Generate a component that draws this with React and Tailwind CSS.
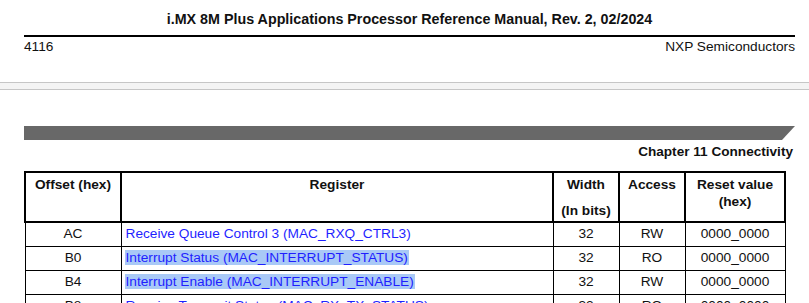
import React from "react";

const rows = [
  { off: "AC", reg: "Receive Queue Control 3 (MAC_RXQ_CTRL3)", w: "32", a: "RW", r: "0000_0000", hl: false },
  { off: "B0", reg: "Interrupt Status (MAC_INTERRUPT_STATUS)", w: "32", a: "RO", r: "0000_0000", hl: true },
  { off: "B4", reg: "Interrupt Enable (MAC_INTERRUPT_ENABLE)", w: "32", a: "RW", r: "0000_0000", hl: true },
  { off: "B8", reg: "Receive Transmit Status (MAC_RX_TX_STATUS)", w: "32", a: "RO", r: "0000_0000", hl: false },
];

export default function App() {
  return (
    <div className="w-[809px] h-[303px] overflow-hidden bg-white text-black font-['Liberation_Sans',Arial,sans-serif]">
      {/* Page header */}
      <div className="pl-6 pr-[14px]">
        <div className="pt-[11px] text-center font-bold text-[14.3px] leading-[16px] text-[#111]">
          i.MX 8M Plus Applications Processor Reference Manual, Rev. 2, 02/2024
        </div>
        <div className="mt-[8px] h-[2px] bg-black" />
        <div className="mt-[2px] flex justify-between text-[13.7px] leading-[16px] text-[#111]">
          <span>4116</span>
          <span>NXP Semiconductors</span>
        </div>
      </div>

      {/* Page gap band */}
      <div className="mt-[27px] h-[8px] border-y border-[#c6c6c6] bg-[#f4f4f4]" />

      {/* Next page */}
      <div className="pl-6 pr-[14px]">
        <div className="mt-[36px] h-[14px] bg-[#686868] [clip-path:polygon(0_0,100%_0,calc(100%-13px)_100%,0_100%)]" />
        <div className="mt-[4px] text-right font-bold text-[13.6px] leading-[16px] pr-[2px] text-[#111]">
          Chapter 11 Connectivity
        </div>
        <table className="mt-[11px] w-[760px] table-fixed border-collapse text-[13.7px] text-[#111]">
          <colgroup>
            <col className="w-[96px]" />
            <col className="w-[432px]" />
            <col className="w-[66px]" />
            <col className="w-[66px]" />
            <col className="w-[100px]" />
          </colgroup>
          <thead>
            <tr className="h-[50px]">
              <th className="border-2 border-black align-top pt-[3px] font-bold leading-[17px]">Offset (hex)</th>
              <th className="border-2 border-black align-top pt-[3px] font-bold leading-[17px]">Register</th>
              <th className="border-2 border-black align-top pt-[3px] font-bold leading-[17px]">
                <div>Width</div>
                <div className="mt-[9px]">(In bits)</div>
              </th>
              <th className="border-2 border-black align-top pt-[3px] font-bold leading-[17px]">Access</th>
              <th className="border-2 border-black align-top pt-[3px] font-bold leading-[17px]">
                <div>Reset value</div>
                <div>(hex)</div>
              </th>
            </tr>
          </thead>
          <tbody>
            {rows.map((r) => (
              <tr key={r.off} className="h-[24px]">
                <td className="border border-black text-center leading-[16px] p-0">{r.off}</td>
                <td className="border border-black leading-[16px] pl-[3px] py-0 text-[#1f1fff] whitespace-nowrap overflow-hidden">
                  <span className={r.hl ? "bg-[#a9c9f6] px-[1px]" : "px-[1px]"}>{r.reg}</span>
                </td>
                <td className="border border-black text-center leading-[16px] p-0">{r.w}</td>
                <td className="border border-black text-center leading-[16px] p-0">{r.a}</td>
                <td className="border border-black text-center leading-[16px] p-0">{r.r}</td>
              </tr>
            ))}
          </tbody>
        </table>
      </div>
    </div>
  );
}
